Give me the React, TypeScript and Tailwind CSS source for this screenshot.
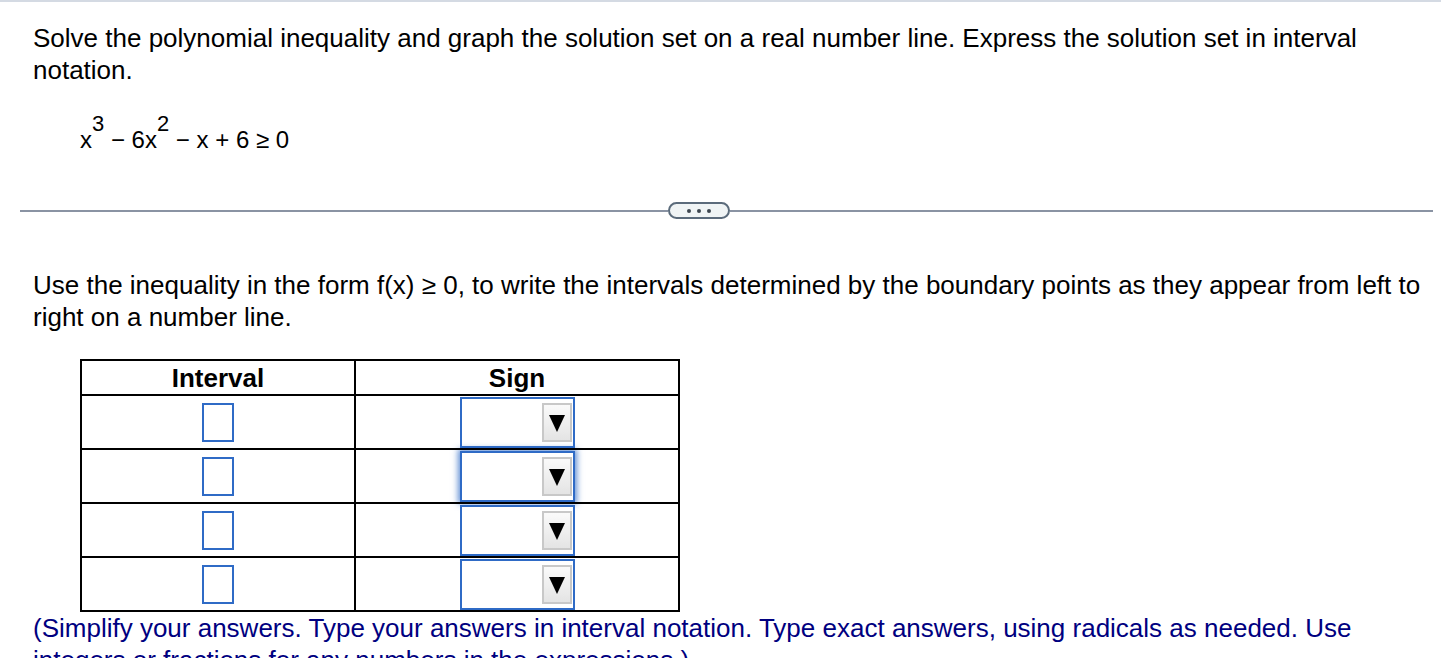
import React from 'react';

const font = { fontFamily: '"Liberation Sans", Arial, Helvetica, sans-serif' };

function IntervalBox() {
  return <div className="mx-auto w-[32px] h-[39px] border-2 border-[#2f6bc6] bg-white" />;
}

function SignSelect({ focused }: { focused?: boolean }) {
  return (
    <div
      className={`ml-[104px] w-[115px] h-[51px] border-2 border-[#2f6bc6] bg-white flex items-center justify-end pr-[1px] ${
        focused ? 'shadow-[0_0_6px_2px_rgba(47,107,198,0.75)]' : ''
      }`}
    >
      <div className="w-[30px] h-[39px] border-2 border-[#c8c8c8] bg-gradient-to-b from-[#fafafa] to-[#e4e4e4] flex items-center justify-center">
        <svg width="16" height="18" viewBox="0 0 16 18">
          <polygon points="0,1 16,1 8,18" fill="#000" />
        </svg>
      </div>
    </div>
  );
}

function Sup({ children }: { children: React.ReactNode }) {
  return <span className="relative -top-[17px] text-[22px] leading-none">{children}</span>;
}

export default function App() {
  const rows = [false, true, false, false];
  return (
    <div className="w-[1441px] h-[658px] overflow-hidden bg-white text-black" style={font}>
      <div className="h-[2px] bg-[#d4dae3]" />
      <div className="pl-[33px] pr-[20px]">
        <p className="mt-[20px] text-[26px] leading-[32px]">
          Solve the polynomial inequality and graph the solution set on a real number line. Express the solution set in interval notation.
        </p>
        <div className="mt-[38px] ml-[47px] h-[32px] text-[24px] leading-[32px] whitespace-pre">
          x<Sup>3</Sup> − 6x<Sup>2</Sup> − x + 6 ≥ 0
        </div>
      </div>

      {/* divider with expand pill */}
      <div className="mt-[46px] ml-[20px] mr-[8px] flex items-center">
        <div className="w-[648px] h-[2px] bg-[#8a93a3]" />
        <div className="w-[62px] h-[17px] rounded-full border-2 border-[#5b6b7b] bg-[#f0f4f5] flex items-center justify-center gap-[6px]">
          <span className="w-[4px] h-[4px] rounded-full bg-[#3d4650]" />
          <span className="w-[4px] h-[4px] rounded-full bg-[#3d4650]" />
          <span className="w-[4px] h-[4px] rounded-full bg-[#3d4650]" />
        </div>
        <div className="flex-1 h-[2px] bg-[#8a93a3]" />
      </div>

      <div className="pl-[33px] pr-[20px]">
        <p className="mt-[50px] text-[26px] leading-[32px]">
          Use the inequality in the form f(x) ≥ 0, to write the intervals determined by the boundary points as they appear from left to right on a number line.
        </p>

        <table className="mt-[26px] ml-[47px] border-collapse border-2 border-black">
          <thead>
            <tr className="h-[35px]">
              <th className="w-[274px] border-2 border-black text-[26px] font-bold leading-none">Interval</th>
              <th className="w-[324px] border-2 border-black text-[26px] font-bold leading-none">Sign</th>
            </tr>
          </thead>
          <tbody>
            {rows.map((focused, i) => (
              <tr key={i} className="h-[54px]">
                <td className="border-2 border-black align-middle">
                  <IntervalBox />
                </td>
                <td className="border-2 border-black align-top pt-[1px]">
                  <SignSelect focused={focused} />
                </td>
              </tr>
            ))}
          </tbody>
        </table>

        <p className="mt-0 text-[26px] leading-[32px] text-[#000080]">
          (Simplify your answers. Type your answers in interval notation. Type exact answers, using radicals as needed. Use integers or fractions for any numbers in the expressions.)
        </p>
      </div>
    </div>
  );
}
